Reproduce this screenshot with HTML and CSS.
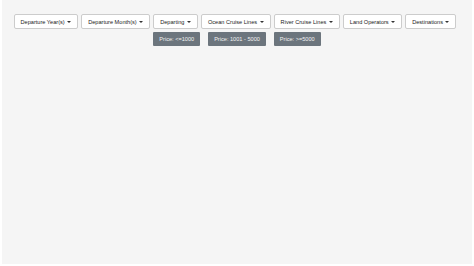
FILE: index.html
```html
<!DOCTYPE html>
<html lang="en">
<head>
    <meta charset="UTF-8">
    <meta name="viewport" content="width=device-width, initial-scale=1.0">
    <title>Cruise Search</title>
    <link rel="stylesheet" href="styles.css">
</head>
<body>
    <div class="panel">
        <div class="filters">
            <button class="dropdown">Departure Year(s) <span class="caret"></span></button>
            <button class="dropdown">Departure Month(s) <span class="caret"></span></button>
            <button class="dropdown">Departing <span class="caret"></span></button>
            <button class="dropdown">Ocean Cruise Lines <span class="caret"></span></button>
            <button class="dropdown">River Cruise Lines <span class="caret"></span></button>
            <button class="dropdown">Land Operators <span class="caret"></span></button>
            <button class="dropdown">Destinations <span class="caret"></span></button>
        </div>
        <div class="prices">
            <span class="price">Price: &lt;=1000</span>
            <span class="price">Price: 1001 - 5000</span>
            <span class="price">Price: &gt;=5000</span>
        </div>
    </div>
</body>
</html>
```

FILE: styles.css
```css
html {
    background-color: #fff;
}
body {
    margin: 0;
    padding: 0;
    font-family: "Liberation Sans", Arial, sans-serif;
}
.panel {
    background-color: #f5f5f5;
    margin: 0 2px;
    height: 264px;
    padding-top: 14px;
    box-sizing: border-box;
}
.filters {
    display: flex;
    justify-content: center;
    gap: 3px;
    padding-right: 4px;
}
.dropdown {
    display: flex;
    flex-shrink: 0;
    align-items: center;
    gap: 2.5px;
    height: 15px;
    padding: 0 6px;
    white-space: nowrap;
    font-family: inherit;
    font-size: 5.6px;
    color: #222;
    background-color: #fff;
    border: 1px solid #ccc;
    border-radius: 2px;
}
.caret {
    width: 0;
    height: 0;
    border-left: 2px solid transparent;
    border-right: 2px solid transparent;
    border-top: 2px solid #333;
}
.prices {
    display: flex;
    justify-content: center;
    gap: 8px;
    margin-top: 3px;
}
.price {
    display: flex;
    align-items: center;
    height: 14px;
    padding: 0 6px;
    white-space: nowrap;
    font-size: 5.6px;
    color: #f2f2f2;
    background-color: #6c757d;
    border-radius: 1px;
}
```
